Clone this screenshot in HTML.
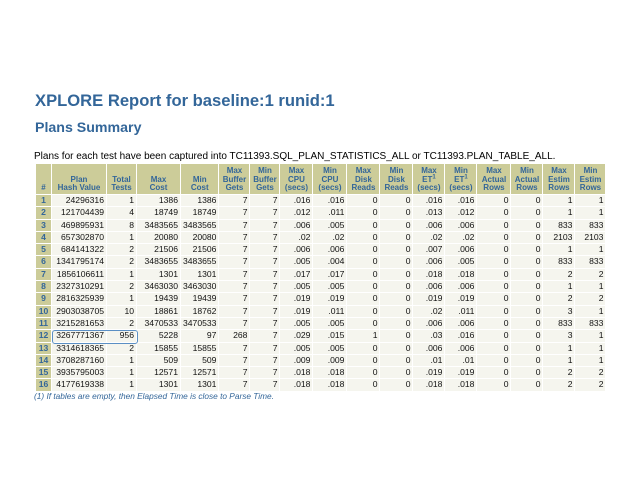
<!DOCTYPE html>
<html><head><style>
body{margin:0;width:638px;height:493px;background:#fff;font-family:"Liberation Sans",Arial,sans-serif;position:relative;overflow:hidden}
h1{position:absolute;left:35px;top:91px;margin:0;font-size:16.6px;color:#336699;font-weight:bold;letter-spacing:0px}
h2{position:absolute;left:35px;top:120px;margin:0;font-size:14.2px;color:#336699;font-weight:bold}
.d{position:absolute;left:34px;top:151px;font-size:10px;color:#000;white-space:nowrap}
table{position:absolute;left:35px;top:163px;border-collapse:separate;border-spacing:1px;font-size:8.6px;table-layout:fixed}
th{background:#cccc99;color:#336699;font-weight:bold;font-size:8px;line-height:8.6px;vertical-align:bottom;text-align:center;padding:1px 1px;height:28px}
td{background:#f5f5ee;text-align:right;padding:0 2px;height:11.3px;line-height:11.3px;color:#111}
td.i{background:#cccc99;color:#336699;font-weight:bold;text-align:center}
.f{position:absolute;left:34px;top:391px;font-size:8.3px;color:#336699;font-style:italic}
.box{position:absolute;left:52px;top:330px;width:84px;height:12px;border:1.5px solid #5b8fc4;border-radius:3px}
sup{font-size:6px;line-height:0}
</style></head><body>
<h1>XPLORE Report for baseline:1 runid:1</h1>
<h2>Plans Summary</h2>
<div class="d">Plans for each test have been captured into TC11393.SQL_PLAN_STATISTICS_ALL or TC11393.PLAN_TABLE_ALL.</div>
<table>
<colgroup><col style="width:15px"><col style="width:54px"><col style="width:29px"><col style="width:43px"><col style="width:35px"><col style="width:30px"><col style="width:29px"><col style="width:32px"><col style="width:33px"><col style="width:32px"><col style="width:32px"><col style="width:31px"><col style="width:31px"><col style="width:33px"><col style="width:31px"><col style="width:31px"><col style="width:30px"></colgroup>
<tr><th>#</th><th>Plan<br>Hash Value</th><th>Total<br>Tests</th><th>Max<br>Cost</th><th>Min<br>Cost</th><th>Max<br>Buffer<br>Gets</th><th>Min<br>Buffer<br>Gets</th><th>Max<br>CPU<br>(secs)</th><th>Min<br>CPU<br>(secs)</th><th>Max<br>Disk<br>Reads</th><th>Min<br>Disk<br>Reads</th><th>Max<br>ET<sup>1</sup><br>(secs)</th><th>Min<br>ET<sup>1</sup><br>(secs)</th><th>Max<br>Actual<br>Rows</th><th>Min<br>Actual<br>Rows</th><th>Max<br>Estim<br>Rows</th><th>Min<br>Estim<br>Rows</th></tr>
<tr><td class="i">1</td><td>24296316</td><td>1</td><td>1386</td><td>1386</td><td>7</td><td>7</td><td>.016</td><td>.016</td><td>0</td><td>0</td><td>.016</td><td>.016</td><td>0</td><td>0</td><td>1</td><td>1</td></tr>
<tr><td class="i">2</td><td>121704439</td><td>4</td><td>18749</td><td>18749</td><td>7</td><td>7</td><td>.012</td><td>.011</td><td>0</td><td>0</td><td>.013</td><td>.012</td><td>0</td><td>0</td><td>1</td><td>1</td></tr>
<tr><td class="i">3</td><td>469895931</td><td>8</td><td>3483565</td><td>3483565</td><td>7</td><td>7</td><td>.006</td><td>.005</td><td>0</td><td>0</td><td>.006</td><td>.006</td><td>0</td><td>0</td><td>833</td><td>833</td></tr>
<tr><td class="i">4</td><td>657302870</td><td>1</td><td>20080</td><td>20080</td><td>7</td><td>7</td><td>.02</td><td>.02</td><td>0</td><td>0</td><td>.02</td><td>.02</td><td>0</td><td>0</td><td>2103</td><td>2103</td></tr>
<tr><td class="i">5</td><td>684141322</td><td>2</td><td>21506</td><td>21506</td><td>7</td><td>7</td><td>.006</td><td>.006</td><td>0</td><td>0</td><td>.007</td><td>.006</td><td>0</td><td>0</td><td>1</td><td>1</td></tr>
<tr><td class="i">6</td><td>1341795174</td><td>2</td><td>3483655</td><td>3483655</td><td>7</td><td>7</td><td>.005</td><td>.004</td><td>0</td><td>0</td><td>.006</td><td>.005</td><td>0</td><td>0</td><td>833</td><td>833</td></tr>
<tr><td class="i">7</td><td>1856106611</td><td>1</td><td>1301</td><td>1301</td><td>7</td><td>7</td><td>.017</td><td>.017</td><td>0</td><td>0</td><td>.018</td><td>.018</td><td>0</td><td>0</td><td>2</td><td>2</td></tr>
<tr><td class="i">8</td><td>2327310291</td><td>2</td><td>3463030</td><td>3463030</td><td>7</td><td>7</td><td>.005</td><td>.005</td><td>0</td><td>0</td><td>.006</td><td>.006</td><td>0</td><td>0</td><td>1</td><td>1</td></tr>
<tr><td class="i">9</td><td>2816325939</td><td>1</td><td>19439</td><td>19439</td><td>7</td><td>7</td><td>.019</td><td>.019</td><td>0</td><td>0</td><td>.019</td><td>.019</td><td>0</td><td>0</td><td>2</td><td>2</td></tr>
<tr><td class="i">10</td><td>2903038705</td><td>10</td><td>18861</td><td>18762</td><td>7</td><td>7</td><td>.019</td><td>.011</td><td>0</td><td>0</td><td>.02</td><td>.011</td><td>0</td><td>0</td><td>3</td><td>1</td></tr>
<tr><td class="i">11</td><td>3215281653</td><td>2</td><td>3470533</td><td>3470533</td><td>7</td><td>7</td><td>.005</td><td>.005</td><td>0</td><td>0</td><td>.006</td><td>.006</td><td>0</td><td>0</td><td>833</td><td>833</td></tr>
<tr><td class="i">12</td><td>3267771367</td><td>956</td><td>5228</td><td>97</td><td>268</td><td>7</td><td>.029</td><td>.015</td><td>1</td><td>0</td><td>.03</td><td>.016</td><td>0</td><td>0</td><td>3</td><td>1</td></tr>
<tr><td class="i">13</td><td>3314618365</td><td>2</td><td>15855</td><td>15855</td><td>7</td><td>7</td><td>.005</td><td>.005</td><td>0</td><td>0</td><td>.006</td><td>.006</td><td>0</td><td>0</td><td>1</td><td>1</td></tr>
<tr><td class="i">14</td><td>3708287160</td><td>1</td><td>509</td><td>509</td><td>7</td><td>7</td><td>.009</td><td>.009</td><td>0</td><td>0</td><td>.01</td><td>.01</td><td>0</td><td>0</td><td>1</td><td>1</td></tr>
<tr><td class="i">15</td><td>3935795003</td><td>1</td><td>12571</td><td>12571</td><td>7</td><td>7</td><td>.018</td><td>.018</td><td>0</td><td>0</td><td>.019</td><td>.019</td><td>0</td><td>0</td><td>2</td><td>2</td></tr>
<tr><td class="i">16</td><td>4177619338</td><td>1</td><td>1301</td><td>1301</td><td>7</td><td>7</td><td>.018</td><td>.018</td><td>0</td><td>0</td><td>.018</td><td>.018</td><td>0</td><td>0</td><td>2</td><td>2</td></tr>
</table>
<div class="box"></div>
<div class="f">(1) If tables are empty, then Elapsed Time is close to Parse Time.</div>
</body></html>
